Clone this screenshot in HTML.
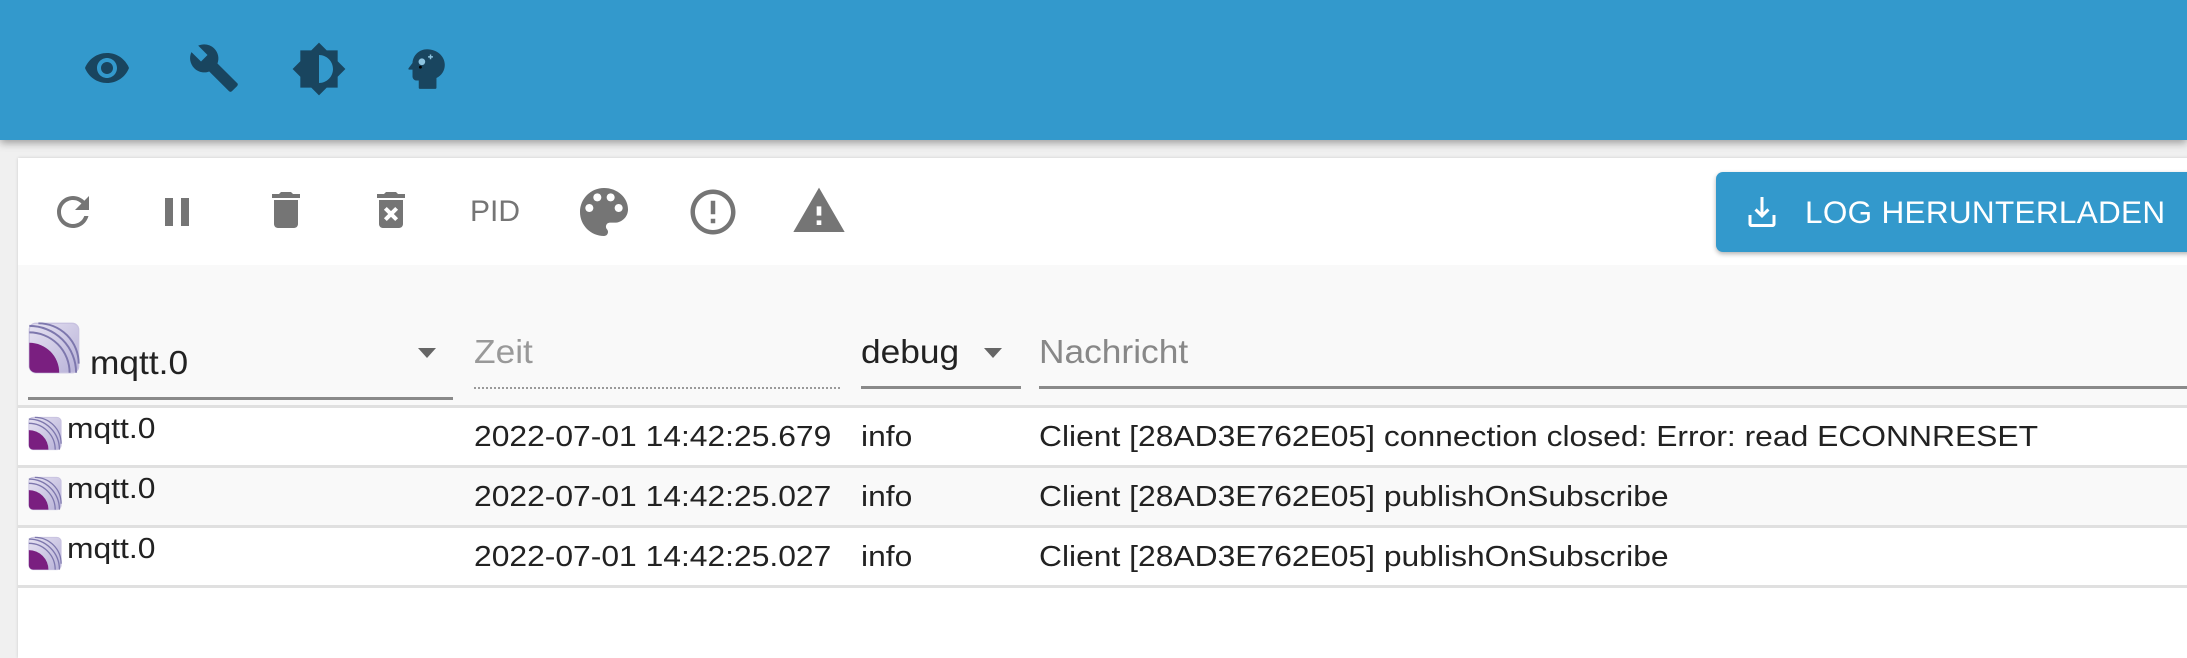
<!DOCTYPE html>
<html><head><meta charset="utf-8"><style>
*{margin:0;padding:0;box-sizing:border-box}
body{width:2187px;height:643px;overflow:hidden;background:#f0f0f0;font-family:"Liberation Sans",sans-serif;position:relative}
.hdr{position:absolute;left:0;top:0;width:2187px;height:140px;background:#3399cc;box-shadow:0 3px 8px rgba(0,0,0,.35);z-index:2}
.hdr svg{position:absolute;fill:#19455f}
.card{position:absolute;left:18px;top:158px;width:2180px;height:500px;background:#fff;box-shadow:0 0 3px rgba(0,0,0,.15)}
.tb svg{position:absolute;fill:#757575}
.pid{position:absolute;left:470px;top:195px;font-size:30px;color:#757575}
.btn{position:absolute;left:1716px;top:172px;width:480px;height:80px;background:#3399cc;border-radius:7px;box-shadow:0 2px 5px rgba(0,0,0,.3);color:#fff;font-size:31.5px;line-height:80px;padding-left:89px;letter-spacing:.3px}
.btn svg{position:absolute;left:28px;top:22px;fill:#fff}
.filt{position:absolute;left:18px;top:265px;width:2180px;height:142px;background:#f9f9f9}
.t{position:absolute;white-space:nowrap;transform-origin:0 50%}
.h{font-size:33px;transform:scaleX(1.07)}
.row{position:absolute;left:18px;width:2180px;height:60px;border-bottom:3px solid #e0e0e0;font-size:29px;color:#222}
.row .t{top:13px;transform:scaleX(1.097)}
</style></head><body>
<div class="hdr">
<svg style="left:83px;top:44px" width="48" height="48" viewBox="0 0 24 24"><path d="M12 4.5C7 4.5 2.73 7.61 1 12c1.730 4.39 6 7.5 11 7.5s9.27-3.11 11-7.5c-1.73-4.39-6-7.5-11-7.5zM12 17c-2.76 0-5-2.240-5-5s2.24-5 5-5 5 2.24 5 5-2.24 5-5 5zm0-8c-1.66 0-3 1.34-3 3s1.34 3 3 3 3-1.34 3-3-1.34-3-3-3z"/></svg>
<svg style="left:188px;top:42px" width="52" height="52" viewBox="0 0 24 24"><path d="M22.7 19l-9.1-9.1c.9-2.3.4-5-1.5-6.9-2-2-5-2.4-7.4-1.3L9 6 6 9 1.6 4.7C.4 7.1.9 10.1 2.9 12.1c1.9 1.9 4.6 2.4 6.9 1.5l9.1 9.1c.4.4 1 .4 1.4 0l2.3-2.3c.5-.4.5-1.1.1-1.4z"/></svg>
<svg style="left:291px;top:41px" width="56" height="56" viewBox="0 0 24 24"><path d="M20 15.31L23.31 12 20 8.69V4h-4.69L12 .69 8.690 4H4v4.69L.69 12 4 15.31V20h4.69L12 23.31 15.31 20H20v-4.69zM12 18V6c3.31 0 6 2.69 6 6s-2.69 6-6 6z"/></svg>
<svg style="left:400px;top:43px" width="50" height="50" viewBox="0 0 24 24"><path d="M13 3C9.2 3 6.2 5.9 6 9.6L4.1 12.1c-.2.3 0 .7.4.7H6V16c0 1.1.9 2 2 2h1v3.5c0 .3.2.5.5.5H17c.3 0 .5-.2.5-.5v-4.7c2.4-1.1 4-3.5 4-6.3C21.5 6.3 17.700 3 13 3z"/><circle cx="10.5" cy="9" r="1.6" fill="#8cc3e0"/><path d="M13.5 6.3h.8v-.8h.7v.8h.8V7H15v.8h-.7V7h-.8z" fill="#8cc3e0"/><circle cx="9.8" cy="11.6" r=".7" fill="#000"/></svg>
</div>
<div class="card"></div>
<div class="tb">
<svg style="left:49px;top:188px" width="48" height="48" viewBox="0 0 24 24"><path d="M17.65 6.35C16.2 4.9 14.21 4 12 4c-4.42 0-7.990 3.58-7.99 8s3.57 8 7.99 8c3.73 0 6.84-2.55 7.73-6h-2.08c-.82 2.33-3.04 4-5.65 4-3.31 0-6-2.69-6-6s2.690-6 6-6c1.66 0 3.14.69 4.22 1.78L13 11h7V4l-2.35 2.35z"/></svg>
<svg style="left:153px;top:188px" width="48" height="48" viewBox="0 0 24 24"><path d="M6 19h4V5H6v14zm8-14v14h4V5h-4z"/></svg>
<svg style="left:262px;top:186px" width="48" height="48" viewBox="0 0 24 24"><path d="M6 19c0 1.1.9 2 2 2h8c1.1 0 2-.9 2-2V7H6v12zM19 4h-3.5l-1-1h-5l-1 1H5v2h14V4z"/></svg>
<svg style="left:367px;top:186px" width="48" height="48" viewBox="0 0 24 24"><path d="M6 19c0 1.1.9 2 2 2h8c1.1 0 2-.9 2-2V7H6v12zm2.46-7.12l1.41-1.41L12 12.59l2.12-2.12 1.41 1.41L13.41 14l2.12 2.12-1.41 1.41L12 15.41l-2.12 2.12-1.41-1.41L10.59 14l-2.13-2.12zM15.5 4l-1-1h-5l-1 1H5v2h14V4z"/></svg>
<svg style="left:572px;top:180px" width="64" height="64" viewBox="0 0 24 24"><path d="M12 3c-4.97 0-9 4.03-9 9s4.03 9 9 9c.83 0 1.5-.67 1.5-1.5 0-.39-.15-.74-.39-1.01-.23-.26-.38-.61-.38-.99 0-.83.67-1.5 1.5-1.5H16c2.76 0 5-2.24 5-5 0-4.42-4.03-8-9-8zm-5.5 9c-.83 0-1.5-.67-1.5-1.5S5.67 9 6.5 9 8 9.67 8 10.5 7.33 12 6.5 12zm3-4C8.67 8 8 7.33 8 6.5S8.67 5 9.5 5s1.5.67 1.5 1.5S10.33 8 9.5 8zm5 0c-.83 0-1.5-.67-1.5-1.5S13.67 5 14.5 5s1.5.67 1.5 1.5S15.33 8 14.5 8zm3 4c-.83 0-1.5-.67-1.5-1.5S16.67 9 17.5 9s1.5.67 1.5 1.5-.67 1.5-1.5 1.5z"/></svg>
<svg style="left:686px;top:185px" width="54" height="54" viewBox="0 0 24 24"><path d="M11 15h2v2h-2zm0-8h2v6h-2zm.99-5C6.47 2 2 6.48 2 12s4.47 10 9.99 10C17.52 22 22 17.52 22 12S17.52 2 11.99 2zM12 20c-4.42 0-8-3.58-8-8s3.58-8 8-8 8 3.58 8 8-3.58 8-8 8z"/></svg>
<svg style="left:791px;top:183px" width="56" height="56" viewBox="0 0 24 24"><path d="M1 21h22L12 2 1 21zm12-3h-2v-2h2v2zm0-4h-2v-4h2v4z"/></svg>
</div>
<div class="pid">PID</div>
<div class="btn"><svg width="36" height="36" viewBox="0 0 24 24"><path d="M12 16l-5-5 1.4-1.4 2.6 2.6V2h2v10.2l2.6-2.6L17 11zM3 14h2v6h14v-6h2v6c0 1.1-.9 2-2 2H5c-1.1 0-2-.9-2-2z"/></svg>LOG HERUNTERLADEN</div>
<div class="filt"></div>
<svg width="0" height="0" style="position:absolute"><defs>
<linearGradient id="bg" x1="0" y1="0" x2="1" y2="1"><stop offset="0" stop-color="#e6e2f2"/><stop offset="1" stop-color="#b8b2d8"/></linearGradient>
<symbol id="mq" viewBox="0 0 40 40"><rect x="1" y="1" width="38" height="38" rx="5" fill="url(#bg)" stroke="#c8c2e0"/><path d="M1 16a23 23 0 0 1 23 23H6a5 5 0 0 1-5-5z" fill="#7a1f80"/><path d="M1 8a31 31 0 0 1 31 31M1 3a36 36 0 0 1 36 36M8 1a31 31 0 0 1 31 31" fill="none" stroke="#7d77ad" stroke-width="1.5"/></symbol></defs></svg>
<svg style="position:absolute;left:28px;top:321px" width="52" height="54"><use href="#mq"/></svg>
<div class="t h" style="left:90px;top:344px;color:#222">mqtt.0</div>
<div style="position:absolute;left:418px;top:348px;border:9px solid transparent;border-top:10px solid #666;border-bottom:0"></div>
<div style="position:absolute;left:28px;top:397px;width:425px;height:3px;background:#8a8a8a"></div>
<div class="t h" style="left:474px;top:333px;color:#999">Zeit</div>
<div style="position:absolute;left:474px;top:387px;width:366px;border-top:2px dotted #9a9a9a"></div>
<div class="t h" style="left:861px;top:333px;color:#222">debug</div>
<div style="position:absolute;left:984px;top:348px;border:9px solid transparent;border-top:10px solid #666;border-bottom:0"></div>
<div style="position:absolute;left:861px;top:386px;width:160px;height:3px;background:#8a8a8a"></div>
<div class="t h" style="left:1039px;top:333px;color:#888">Nachricht</div>
<div style="position:absolute;left:1039px;top:386px;width:1150px;height:3px;background:#8a8a8a"></div>
<div style="position:absolute;left:18px;top:405px;width:2180px;height:3px;background:#e0e0e0"></div>
<div class="row" style="top:408px;background:#fff"><svg style="position:absolute;left:10px;top:8px" width="34" height="35"><use href="#mq"/></svg><div class="t" style="left:49px;top:5px">mqtt.0</div><div class="t" style="left:456px">2022-07-01 14:42:25.679</div><div class="t" style="left:843px">info</div><div class="t" style="left:1021px">Client [28AD3E762E05] connection closed: Error: read ECONNRESET</div></div>
<div class="row" style="top:468px;background:#f9f9f9"><svg style="position:absolute;left:10px;top:8px" width="34" height="35"><use href="#mq"/></svg><div class="t" style="left:49px;top:5px">mqtt.0</div><div class="t" style="left:456px">2022-07-01 14:42:25.027</div><div class="t" style="left:843px">info</div><div class="t" style="left:1021px">Client [28AD3E762E05] publishOnSubscribe</div></div>
<div class="row" style="top:528px;background:#fff"><svg style="position:absolute;left:10px;top:8px" width="34" height="35"><use href="#mq"/></svg><div class="t" style="left:49px;top:5px">mqtt.0</div><div class="t" style="left:456px">2022-07-01 14:42:25.027</div><div class="t" style="left:843px">info</div><div class="t" style="left:1021px">Client [28AD3E762E05] publishOnSubscribe</div></div>
</body></html>
